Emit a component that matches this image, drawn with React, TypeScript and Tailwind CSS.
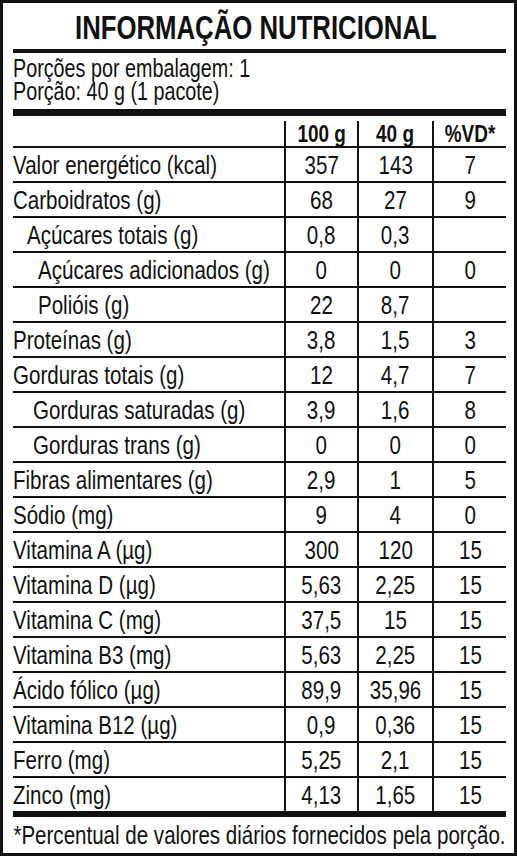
import type { ReactNode } from "react";

const rows: [string, string, string, string, number][] = [
  ["Valor energético (kcal)", "357", "143", "7", 0],
  ["Carboidratos (g)", "68", "27", "9", 0],
  ["Açúcares totais (g)", "0,8", "0,3", "", 14],
  ["Açúcares adicionados (g)", "0", "0", "0", 25],
  ["Polióis (g)", "22", "8,7", "", 25],
  ["Proteínas (g)", "3,8", "1,5", "3", 0],
  ["Gorduras totais (g)", "12", "4,7", "7", 0],
  ["Gorduras saturadas (g)", "3,9", "1,6", "8", 20],
  ["Gorduras trans (g)", "0", "0", "0", 20],
  ["Fibras alimentares (g)", "2,9", "1", "5", 0],
  ["Sódio (mg)", "9", "4", "0", 0],
  ["Vitamina A (µg)", "300", "120", "15", 0],
  ["Vitamina D (µg)", "5,63", "2,25", "15", 0],
  ["Vitamina C (mg)", "37,5", "15", "15", 0],
  ["Vitamina B3 (mg)", "5,63", "2,25", "15", 0],
  ["Ácido fólico (µg)", "89,9", "35,96", "15", 0],
  ["Vitamina B12 (µg)", "0,9", "0,36", "15", 0],
  ["Ferro (mg)", "5,25", "2,1", "15", 0],
  ["Zinco (mg)", "4,13", "1,65", "15", 0],
];

// texto condensado (a fonte do rótulo é uma Helvetica Condensed)
function Narrow({ children, left }: { children: ReactNode; left?: boolean }) {
  return (
    <span
      className={
        left
          ? "inline-block whitespace-nowrap scale-x-[0.79] origin-left"
          : "inline-block whitespace-nowrap scale-x-[0.79] origin-center"
      }
    >
      {children}
    </span>
  );
}

export default function App() {
  return (
    <div
      className="w-[517px] h-[856px] border-[3px] border-[#111] bg-white pl-[10px] pr-[8px] flex flex-col text-[#111]"
      style={{ fontFamily: "'Liberation Sans', Arial, sans-serif" }}
    >
      {/* título */}
      <div className="h-[46px] flex items-center justify-center pr-2 pt-[2px] text-[33px] font-bold leading-none overflow-hidden">
        <span className="inline-block whitespace-nowrap scale-x-[0.78] origin-center">
          INFORMAÇÃO NUTRICIONAL
        </span>
      </div>
      <div className="h-[4px] bg-[#111]" />

      {/* porções */}
      <div className="h-[56px] pt-[4px] text-[25px] leading-[23px] overflow-hidden">
        <p>
          <Narrow left>Porções por embalagem: 1</Narrow>
        </p>
        <p>
          <Narrow left>Porção: 40 g (1 pacote)</Narrow>
        </p>
      </div>
      <div className="h-[7px] bg-[#111]" />

      {/* cabeçalho */}
      <div className="h-[32px] pt-[5px] grid grid-cols-[271px_73px_75px_1fr] border-b-2 border-[#111] text-[24px] font-bold leading-none">
        <div />
        <div className="border-l-2 border-[#111] flex items-center justify-center">
          <Narrow>100 g</Narrow>
        </div>
        <div className="border-l-2 border-[#111] flex items-center justify-center">
          <Narrow>40 g</Narrow>
        </div>
        <div className="border-l-2 border-[#111] flex items-center justify-center">
          <Narrow>%VD*</Narrow>
        </div>
      </div>

      {/* linhas */}
      <div className="h-[663px] flex flex-col text-[26px] leading-none">
        {rows.map(([label, a, b, c, indent], i) => (
          <div
            key={label}
            className={
              i < rows.length - 1
                ? "flex-1 grid grid-cols-[271px_73px_75px_1fr] border-b-2 border-[#111]"
                : "flex-1 grid grid-cols-[271px_73px_75px_1fr]"
            }
          >
            <div className="flex items-center overflow-hidden" style={{ paddingLeft: indent }}>
              <Narrow left>{label}</Narrow>
            </div>
            <div className="border-l-2 border-[#111] flex items-center justify-center">
              <Narrow>{a}</Narrow>
            </div>
            <div className="border-l-2 border-[#111] flex items-center justify-center">
              <Narrow>{b}</Narrow>
            </div>
            <div className="border-l-2 border-[#111] flex items-center justify-center">
              <Narrow>{c}</Narrow>
            </div>
          </div>
        ))}
      </div>
      <div className="h-[6px] bg-[#111]" />

      {/* rodapé */}
      <div className="flex-1 flex items-center justify-center text-[26px] leading-none -mx-[3px] overflow-hidden">
        <Narrow>*Percentual de valores diários fornecidos pela porção.</Narrow>
      </div>
    </div>
  );
}
